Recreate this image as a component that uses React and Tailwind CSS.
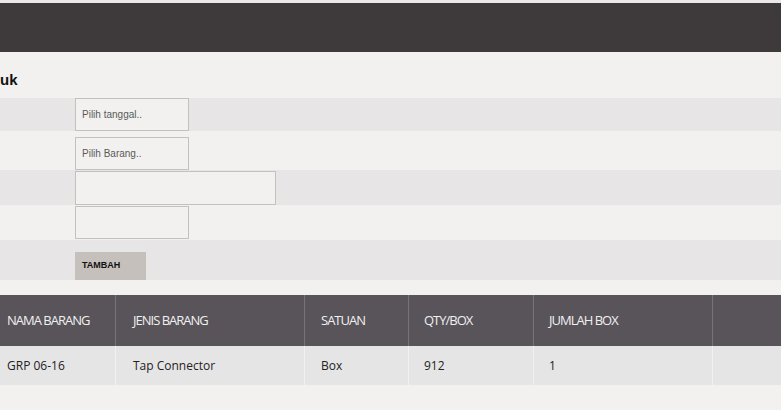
import React from 'react';

const columns = ['NAMA BARANG', 'JENIS BARANG', 'SATUAN', 'QTY/BOX', 'JUMLAH BOX', ''];
const widths = ['w-[116px]', 'w-[189px]', 'w-[104px]', 'w-[125px]', 'w-[179px]', 'flex-1'];
const row = ['GRP 06-16', 'Tap Connector', 'Box', '912', '1', ''];
const pads = ['pl-[7px]', 'pl-[17px]', 'pl-[16px]', 'pl-[15px]', 'pl-[15px]', 'pl-[15px]'];

const Field = ({ placeholder, wide }) => (
  <input
    placeholder={placeholder}
    className={`${wide ? 'w-[201px] h-[34px]' : 'w-[114px] h-[33px]'} border border-[#c3c1c0] bg-[#f2f1ef] px-[6px] text-[10px] text-[#444] placeholder:text-[#5a5a5a] outline-none`}
    style={{ fontFamily: '"Liberation Sans", Arial, sans-serif' }}
  />
);

export default function App() {
  return (
    <div className="min-h-[410px] w-[781px] overflow-hidden bg-[#f2f1ef]" style={{ fontFamily: '"Open Sans", sans-serif' }}>
      <div className="h-[3px] bg-[#e9e7e7]" />
      <div className="h-[49px] bg-[#3e3a3b]" />

      <div className="h-[46px] pt-[18px]">
        <h2 className="text-[15px] font-bold leading-[20px] text-[#111]" style={{ fontFamily: '"Liberation Sans", Arial, sans-serif' }}>uk</h2>
      </div>

      <div className="flex h-[33px] bg-[#e7e5e5]">
        <div className="w-[75px]" />
        <Field placeholder="Pilih tanggal.." />
      </div>
      <div className="flex h-[39px] pt-[6px]">
        <div className="w-[75px]" />
        <Field placeholder="Pilih Barang.." />
      </div>
      <div className="flex h-[35px] bg-[#e7e5e5] pt-[1px]">
        <div className="w-[75px]" />
        <Field wide />
      </div>
      <div className="flex h-[35px] pt-[1px]">
        <div className="w-[75px]" />
        <Field />
      </div>
      <div className="flex h-[40px] bg-[#e7e5e5] pt-[12px]">
        <div className="w-[75px]" />
        <button
          className="h-[28px] w-[71px] bg-[#c5c0bc] pl-[7px] text-left text-[9px] font-bold text-[#111]"
          style={{ fontFamily: '"Liberation Sans", Arial, sans-serif' }}
        >
          TAMBAH
        </button>
      </div>

      <div className="mt-[15px]">
        <div className="flex h-[51px] bg-[#58545a]">
          {columns.map((c, i) => (
            <div
              key={i}
              className={`${widths[i]} ${pads[i]} flex items-center text-[13px] tracking-[-1px] text-[#f1eff1] ${i < 5 ? 'border-r border-[#77737a]' : ''}`}
            >
              {c}
            </div>
          ))}
        </div>
        <div className="flex h-[39px] bg-[#e6e5e5]">
          {row.map((c, i) => (
            <div
              key={i}
              className={`${widths[i]} ${pads[i]} flex items-center text-[12px] text-[#222] ${i < 5 ? 'border-r border-[#f1f0f0]' : ''}`}
            >
              {c}
            </div>
          ))}
        </div>
      </div>
    </div>
  );
}
